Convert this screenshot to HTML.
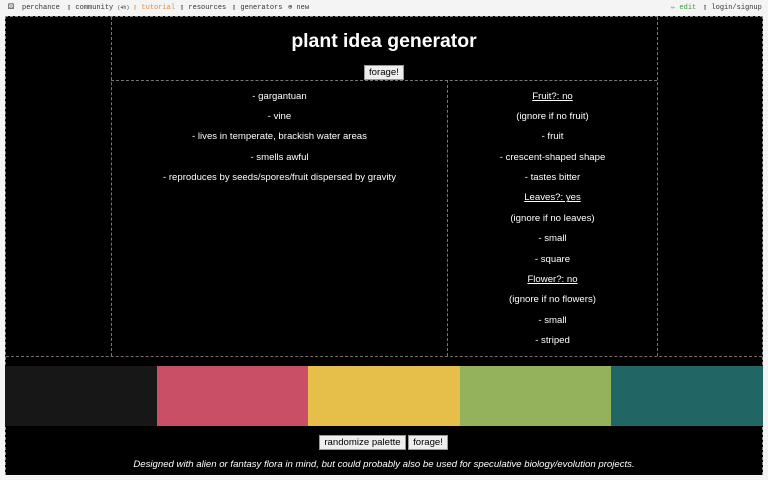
<!DOCTYPE html>
<html><head><style>
*{margin:0;padding:0;box-sizing:border-box}
body{width:768px;height:480px;background:#f4f4f4;font-family:"Liberation Sans",sans-serif;position:relative;overflow:hidden}
.bar{position:absolute;top:0;left:0;width:768px;height:16px;font-family:"Liberation Mono",monospace;font-size:7px;color:#333;line-height:16px}
.bar span{position:absolute}
.main{position:absolute;left:5px;top:16px;width:758px;height:459px;background:#000;border:1px dashed #888;border-bottom:none}
.d{position:absolute;border-color:#777;border-style:dashed;border-width:0}
.t{position:absolute;color:#fff;font-size:9.6px;text-align:center;line-height:12px}
.t div{height:20.4px}
u{text-decoration:underline}
.btn{position:absolute;background:#eee;border:1px solid #999;color:#000;font-size:9.6px;height:15px;line-height:13px;padding:0 4px}
.sw{position:absolute;top:366px;height:60px;width:152px}
</style></head><body>
<div class="bar">
<span style="left:8px;top:0;font-size:10px">⚄</span>
<span style="left:22px">perchance</span>
<span style="left:67px">▯ community <small style="font-size:5px">(4h)</small></span>
<span style="left:133px;color:#e58b3a">▯ tutorial</span>
<span style="left:180px">▯ resources</span>
<span style="left:232px">▯ generators</span>
<span style="left:288px">⊕ new</span>
<span style="left:671px;color:#3a9a3a">✏ edit</span>
<span style="left:703px">▯ login/signup</span>
</div>
<div class="main"></div>
<div class="d" style="left:111px;top:17px;height:339px;border-left-width:1px"></div>
<div class="d" style="left:657px;top:17px;height:339px;border-left-width:1px"></div>
<div class="d" style="left:111px;top:80px;width:546px;border-top-width:1px"></div>
<div class="d" style="left:447px;top:80px;height:276px;border-left-width:1px"></div>
<div class="d" style="left:6px;top:356px;width:756px;border-top-width:1px;border-color:#7a6a6a"></div>
<div style="position:absolute;left:111px;width:546px;top:30px;text-align:center;color:#fff;font-weight:bold;font-size:19.4px">plant idea generator</div>
<div class="btn" style="left:364px;top:65px">forage!</div>
<div class="t" style="left:112px;width:335px;top:90.5px">
<div>- gargantuan</div><div>- vine</div><div>- lives in temperate, brackish water areas</div><div>- smells awful</div><div>- reproduces by seeds/spores/fruit dispersed by gravity</div></div>
<div class="t" style="left:448px;width:209px;top:90.5px">
<div><u>Fruit?: no</u></div><div>(ignore if no fruit)</div><div>- fruit</div><div>- crescent-shaped shape</div><div>- tastes bitter</div><div><u>Leaves?: yes</u></div><div>(ignore if no leaves)</div><div>- small</div><div>- square</div><div><u>Flower?: no</u></div><div>(ignore if no flowers)</div><div>- small</div><div>- striped</div></div>
<div class="sw" style="left:5px;background:#171717"></div>
<div class="sw" style="left:157px;background:#c94f66"></div>
<div class="sw" style="left:308px;background:#e6bf4a"></div>
<div class="sw" style="left:460px;background:#94b25c"></div>
<div class="sw" style="left:611px;width:152px;background:#216664"></div>
<div class="btn" style="left:319px;top:435px;width:87px;text-align:center;padding:0">randomize palette</div>
<div class="btn" style="left:408px;top:435px;width:40px;text-align:center;padding:0">forage!</div>
<div style="position:absolute;left:5px;width:758px;top:459px;text-align:center;color:#fff;font-style:italic;font-size:9.6px">Designed with alien or fantasy flora in mind, but could probably also be used for speculative biology/evolution projects.</div>
</body></html>
